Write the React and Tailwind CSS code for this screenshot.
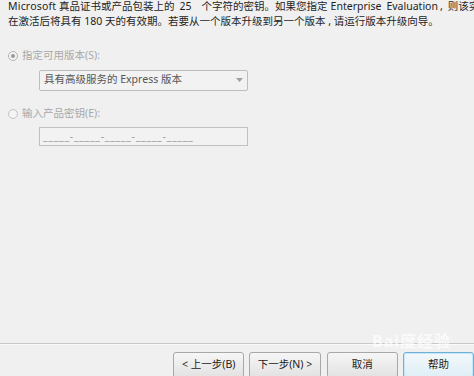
export default function App() {
  const font = { fontFamily: '"Noto Sans", "Noto Sans CJK SC", sans-serif' };
  return (
    <div className="w-[474px] h-[376px] overflow-hidden bg-[#f0f0f0] relative flex flex-col" style={font}>
      <div className="-mt-[1px] pl-[8px] text-[10.5px] leading-[14.5px] text-[#1e1e1e] whitespace-nowrap overflow-hidden">
        <div>
          <span className="tracking-[0.2px]">Microsoft</span> 真品证书或产品包装上的<span className="ml-[5px]">25</span><span className="ml-[10px]">个字符的密钥。如果您指定</span>
          <span className="ml-[3px]">Enterprise</span>
          <span className="ml-[5px]">Evaluation</span>
          <span className="ml-[2px]">,</span>
          <span className="ml-[5px]">则该实例</span>
        </div>
        <div>在激活后将具有 180 天的有效期。若要从一个版本升级到另一个版本 , 请运行版本升级向导。</div>
      </div>

      <div className="mt-[20px] pl-[8px] flex items-center gap-[4px] text-[10.5px] text-[#a8a8a8]">
        <span className="w-[10px] h-[10px] rounded-full border border-[#b4b4b4] bg-[#f4f4f4] flex items-center justify-center">
          <span className="w-[4px] h-[4px] rounded-full bg-[#9a9a9a]"></span>
        </span>
        <span>指定可用版本(S):</span>
      </div>

      <div className="mt-[6px] ml-[39px] w-[209px] h-[21px] border border-[#bdbdbd] rounded-[2px] bg-[#f2f2f2] flex items-center justify-between pl-[4px] pr-[4px] text-[10.5px] text-[#555]">
        <span>具有高级服务的 Express 版本</span>
        <svg width="7" height="4" viewBox="0 0 7 4"><path d="M0 0 L7 0 L3.5 4 Z" fill="#a0a0a0" /></svg>
      </div>

      <div className="mt-[15px] pl-[8px] flex items-center gap-[4px] text-[10.5px] text-[#a8a8a8]">
        <span className="w-[10px] h-[10px] rounded-full border border-[#c4c4c4] bg-[#f4f4f4]"></span>
        <span>输入产品密钥(E):</span>
      </div>

      <div className="mt-[5px] ml-[39px] w-[209px] h-[19px] border border-[#c0c0c0] bg-[#f2f2f2] flex items-center pl-[3px] text-[10.5px] text-[#9a9a9a] leading-none">
        <span className="tracking-[0.7px]">_____-_____-_____-_____-_____</span>
      </div>

      <div className="flex-1"></div>

      <div className="h-[2px] border-t border-[#c8c8c8] border-b border-b-[#fafafa]"></div>

      <div className="mt-[7px] h-[24px] flex text-[10.5px] text-[#222]">
        <div className="w-[175px]"></div>
        <div className="w-[72px] h-[26px] border border-[#a8a8a8] rounded-[3px] bg-gradient-to-b from-[#f6f6f6] to-[#e2e2e2] flex items-center justify-center">&lt; 上一步(B)</div>
        <div className="ml-[5px] w-[72px] h-[26px] border border-[#a8a8a8] rounded-[3px] bg-gradient-to-b from-[#f6f6f6] to-[#e2e2e2] flex items-center justify-center">下一步(N) &gt;</div>
        <div className="ml-[6px] w-[72px] h-[26px] border border-[#a8a8a8] rounded-[3px] bg-gradient-to-b from-[#f6f6f6] to-[#e2e2e2] flex items-center justify-center">取消</div>
        <div className="ml-[5px] w-[72px] h-[26px] border border-[#6fb0d8] rounded-[3px] bg-gradient-to-b from-[#f2f8fb] to-[#dfeef6] flex items-center justify-center shadow-[inset_0_0_0_1px_#c8e6f5]">帮助</div>
      </div>
      <div className="absolute left-[372px] top-[331px] text-[16px] leading-[20px] font-bold text-white/70 tracking-[1px] pointer-events-none">Bai度经验</div>
    </div>
  );
}
